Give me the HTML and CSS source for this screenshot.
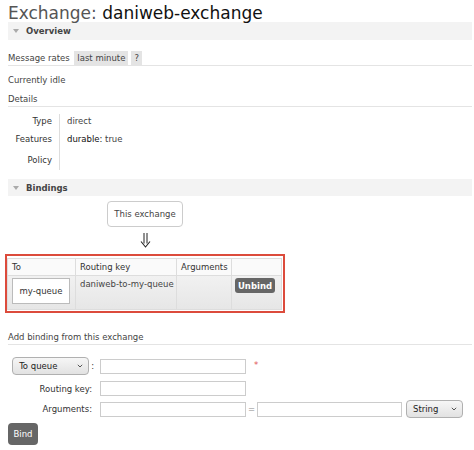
FILE: index.html
```html
<!DOCTYPE html>
<html>
<head>
<meta charset="utf-8">
<link rel="stylesheet" href="styles.css">
</head>
<body>
<div class="page">
  <h1 class="title"><span class="t-label">Exchange:</span> <span class="t-name">daniweb-exchange</span></h1>

  <div class="section-bar"><span class="tri"></span>Overview</div>

  <div class="rates-row">Message rates <span class="chip chip-first">last minute</span><span class="chip">?</span></div>
  <div class="plain-row">Currently idle</div>
  <div class="sub-head details-head">Details</div>

  <div class="details">
    <div class="d-label r1">Type</div><div class="d-value r1">direct</div>
    <div class="d-label r2">Features</div><div class="d-value r2"><span class="feat">durable:</span> true</div>
    <div class="d-label r3">Policy</div><div class="d-value r3"></div>
  </div>

  <div class="section-bar bindings-bar"><span class="tri"></span>Bindings</div>

  <div class="bindings-block">
    <div class="this-ex">This exchange</div>
    <div class="arrow"><svg width="11" height="15" viewBox="0 0 11 15"><path d="M4 0 V10.5 M7 0 V10.5" fill="none" stroke="#222" stroke-width="1"/><path d="M1 8.5 L5.5 14 L10 8.5" fill="none" stroke="#222" stroke-width="1.1"/></svg></div>
    <div class="red-frame">
      <table class="bindings">
        <thead>
          <tr><th class="c-to">To</th><th class="c-key">Routing key</th><th class="c-args">Arguments</th><th class="c-act"></th></tr>
        </thead>
        <tbody>
          <tr>
            <td class="c-to"><div class="queue-box">my-queue</div></td>
            <td class="c-key"><span class="key-text">daniweb-to-my-queue</span></td>
            <td class="c-args"></td>
            <td class="c-act"><span class="btn-unbind">Unbind</span></td>
          </tr>
        </tbody>
      </table>
    </div>
  </div>

  <div class="sub-head add-head">Add binding from this exchange</div>

  <div class="form">
    <div class="f-row row-dest">
      <div class="f-label"><span class="sel sel-dest">To queue<svg class="chev" width="6" height="4" viewBox="0 0 6 4"><path d="M0.8 0.8 L3 3 L5.2 0.8" fill="none" stroke="#555" stroke-width="1"/></svg></span><span class="colon">:</span></div>
      <span class="inp"></span>
      <span class="req">*</span>
    </div>
    <div class="f-row row-key">
      <div class="f-label"><span class="lbl">Routing key:</span></div>
      <span class="inp"></span>
    </div>
    <div class="f-row row-args">
      <div class="f-label"><span class="lbl">Arguments:</span></div>
      <span class="inp"></span>
      <span class="eq">=</span>
      <span class="inp inp2"></span>
      <span class="sel sel-type">String<svg class="chev" width="6" height="4" viewBox="0 0 6 4"><path d="M0.8 0.8 L3 3 L5.2 0.8" fill="none" stroke="#555" stroke-width="1"/></svg></span>
    </div>
    <div class="btn-bind">Bind</div>
  </div>
</div>
</body>
</html>
```

FILE: styles.css
```css
html, body {
  margin: 0;
  padding: 0;
  background: #ffffff;
}

body {
  font-family: "DejaVu Sans", Verdana, sans-serif;
  font-size: 8.5px;
  color: #444;
}

.page {
  width: 464px;
  padding: 0 2px 0 8px;
}

.title {
  margin: 0;
  height: 22px;
  line-height: 26px;
  font-size: 17px;
  font-weight: normal;
  white-space: nowrap;
}

.t-label {
  color: #555;
}

.t-name {
  color: #111;
}

.section-bar {
  display: flex;
  align-items: center;
  height: 18px;
  padding-left: 5px;
  background: #f3f3f3;
  font-weight: bold;
  color: #444;
}

.tri {
  width: 0;
  height: 0;
  border-left: 3px solid transparent;
  border-right: 3px solid transparent;
  border-top: 4px solid #aaa;
  margin-right: 7px;
}

.rates-row {
  margin-top: 11px;
  height: 14px;
  line-height: 14px;
  border-bottom: 1px solid #e4e4e4;
  display: flex;
  align-items: center;
  white-space: pre;
}

.chip {
  background: #e4e4e4;
  padding: 0 3px;
  height: 14px;
  line-height: 14px;
  margin-left: 3px;
}

.chip-first {
  margin-left: 2px;
}

.plain-row {
  margin-top: 6px;
  height: 16px;
  line-height: 16px;
}

.sub-head {
  height: 15px;
  line-height: 16px;
  border-bottom: 1px solid #e4e4e4;
}

.details-head {
  margin-top: 3px;
}

.details {
  margin-top: 7px;
  display: grid;
  grid-template-columns: 52px auto;
}

.d-label {
  text-align: right;
  padding-right: 7px;
  border-right: 1px solid #ddd;
  color: #333;
  display: flex;
  align-items: center;
  justify-content: flex-end;
}

.d-value {
  padding-left: 7px;
  display: flex;
  align-items: center;
  color: #444;
  white-space: pre;
}

.r1 { height: 14px; }
.r2 { height: 22px; }
.r3 { height: 20px; }

.feat {
  color: #111;
}

.bindings-bar {
  margin-top: 9px;
  height: 17px;
}

.bindings-block {
  width: 280px;
  margin-left: -3px;
}

.this-ex {
  margin: 5px auto 0;
  width: 76px;
  height: 26px;
  box-sizing: border-box;
  border: 1px solid #ccc;
  border-radius: 4px;
  display: flex;
  align-items: center;
  justify-content: center;
  color: #444;
}

.arrow {
  height: 27px;
  display: flex;
  align-items: center;
  justify-content: center;
  padding-left: 1px;
  box-sizing: border-box;
}

.arrow svg {
  display: block;
}

.red-frame {
  border: 2px solid #dc4b3c;
  padding: 2px 2px 1px 0;
}

.bindings {
  border-collapse: collapse;
  table-layout: fixed;
  width: 274px;
  border: 1px solid #ddd;
}

.bindings th,
.bindings td {
  border: 1px solid #ddd;
  padding: 0 0 0 4px;
  text-align: left;
  font-weight: normal;
}

.bindings th {
  height: 16px;
  line-height: 16px;
  background: #fafafa;
  color: #333;
  vertical-align: middle;
}

.bindings tbody tr {
  background: linear-gradient(#f1f1f1, #e6e6e6);
}

.bindings td {
  height: 33px;
  vertical-align: top;
  color: #444;
}

.c-to { width: 63px; }
.c-key { width: 96px; }
.c-args { width: 50px; }
.c-act { width: 45px; }

.queue-box {
  margin-top: 2px;
  margin-left: 0;
  width: 58px;
  height: 26px;
  box-sizing: border-box;
  border: 1px solid #bbb;
  background: #fff;
  display: flex;
  align-items: center;
  justify-content: center;
  color: #333;
}

.key-text {
  display: block;
  margin-top: 2px;
  line-height: 12px;
}

.btn-unbind {
  display: flex;
  align-items: center;
  justify-content: center;
  margin-top: 2px;
  margin-left: -1px;
  width: 40px;
  height: 15px;
  border-radius: 3px;
  background: #666;
  color: #fff;
  font-weight: bold;
}

.add-head {
  margin-top: 16px;
}

.form {
  margin-top: 12px;
}

.f-row {
  display: flex;
  align-items: center;
}

.row-dest { height: 18px; }
.row-key { height: 17px; margin-top: 5px; }
.row-args { height: 18px; margin-top: 3px; }

.f-label {
  width: 86px;
  margin-right: 6px;
  display: flex;
  align-items: center;
  justify-content: flex-end;
  color: #333;
}

.lbl {
  padding-right: 2px;
}

.colon {
  margin-left: 2px;
}

.sel {
  display: inline-flex;
  align-items: center;
  justify-content: space-between;
  box-sizing: border-box;
  height: 18px;
  padding: 0 5px 0 6px;
  border: 1px solid #b0b0b0;
  border-radius: 4px;
  background: linear-gradient(#f6f6f6, #e2e2e2);
  color: #222;
}

.sel-dest {
  width: 77px;
}

.sel-type {
  width: 57px;
  margin-left: 4px;
}

.inp {
  display: block;
  width: 146px;
  height: 15px;
  box-sizing: border-box;
  border: 1px solid #ccc;
  background: #fff;
}

.inp2 {
  width: 145px;
}

.req {
  margin-left: 8px;
  color: #e05555;
  align-self: flex-start;
  margin-top: 3px;
}

.eq {
  width: 11px;
  text-align: center;
  color: #888;
}

.btn-bind {
  margin-top: 5px;
  width: 30px;
  height: 22px;
  border-radius: 4px;
  background: #666;
  color: #fff;
  display: flex;
  align-items: center;
  justify-content: center;
}
```
